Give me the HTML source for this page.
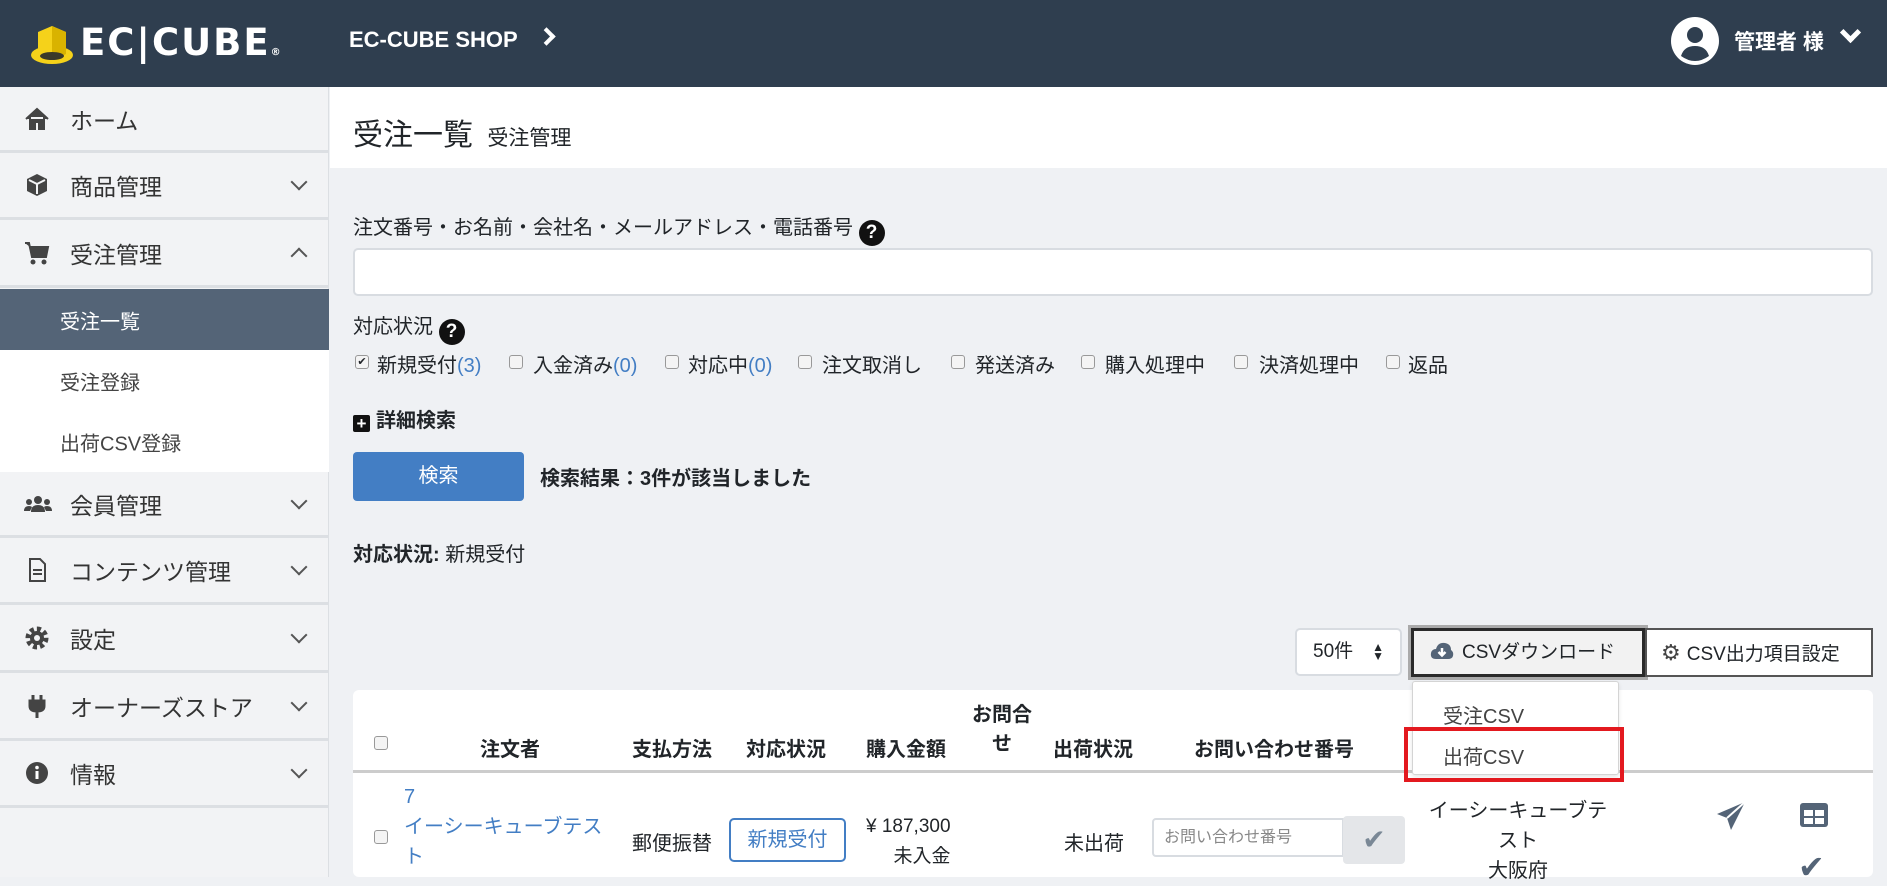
<!DOCTYPE html>
<html><head><meta charset="utf-8"><style>
*{box-sizing:border-box;margin:0;padding:0}
body{width:1887px;height:877px;overflow:hidden;background:#eff1f4;font-family:"Liberation Sans","Noto Sans CJK JP",sans-serif;color:#212529;position:relative}
.a{position:absolute;white-space:nowrap}
.hd{position:absolute;left:0;top:0;width:1887px;height:87px;background:#2f3e4f;color:#fff}
.sb{position:absolute;left:0;top:87px;width:329px;height:790px;background:#f2f3f5;border-right:1px solid #dcdfe3}
.it{position:absolute;left:0;width:329px;border-bottom:3px solid #dcdfe3;font-size:23px;color:#333}
.it span{position:absolute;left:70px;top:50%;transform:translateY(-50%)}
.it i{position:absolute;left:24px;top:50%;transform:translateY(-50%);width:26px;height:26px}
.it b{position:absolute;right:24px;top:50%;width:12px;height:12px;border-right:2px solid #555;border-bottom:2px solid #555;transform:translateY(-75%) rotate(45deg)}
.sub{position:absolute;left:0;width:329px;background:#fff;font-size:20px;color:#444}
.sub span{position:absolute;left:60px;top:50%;transform:translateY(-50%)}
.cb{display:inline-block;width:14px;height:14px;border:1px solid #999;border-radius:3px;background:#f4f4f4}
.ck{position:absolute;top:355px}
.ct{position:absolute;top:349px;font-size:20px;white-space:nowrap}
.th{position:absolute;font-weight:bold;font-size:20px;text-align:center}
</style></head><body>
<div class="hd">
 <svg class="a" style="left:29px;top:22px" width="46" height="44" viewBox="0 0 46 44"><ellipse cx="23" cy="33" rx="21" ry="9" fill="#f5d21a"/><path d="M9 10 L23 4 L37 10 L37 32 Q23 40 9 32Z" fill="#f5d21a"/><path d="M23 4 L37 10 L37 32 Q30 36 23 36Z" fill="#d9b300"/><ellipse cx="23" cy="34" rx="12" ry="4" fill="#3a3a2a"/></svg>
 <div class="a" style="left:80px;top:21px;font-size:37px;font-weight:bold;letter-spacing:2px;font-family:'DejaVu Sans',sans-serif">EC|CUBE<span style="font-size:10px">®</span></div>
 <div class="a" style="left:349px;top:27px;font-size:22px;font-weight:bold">EC-CUBE SHOP</div>
 <div class="a" style="left:540px;top:30px;width:13px;height:13px;border-right:4px solid #fff;border-top:4px solid #fff;transform:rotate(45deg)"></div>
 <svg class="a" style="left:1670px;top:16px" width="50" height="50" viewBox="0 0 50 50"><circle cx="25" cy="25" r="24" fill="#fff"/><circle cx="25" cy="19" r="8" fill="#2f3e4f"/><path d="M11 40 Q14 30 25 30 Q36 30 39 40 Q25 50 11 40Z" fill="#2f3e4f"/></svg>
 <div class="a" style="left:1734px;top:26px;font-size:21px;font-weight:bold">管理者 様</div>
 <div class="a" style="left:1843px;top:25px;width:15px;height:15px;border-right:5px solid #fff;border-bottom:5px solid #fff;transform:rotate(45deg)"></div>
</div>
<div class="sb">
 <div class="it" style="top:0;height:66px"><i><svg width="26" height="26" viewBox="0 0 26 26"><path d="M2 13 L13 3 L24 13 M6 11 V23 H11 V16 H15 V23 H20 V11" fill="#444" stroke="#444" stroke-width="2"/></svg></i><span>ホーム</span></div>
 <div class="it" style="top:66px;height:67px"><i><svg width="26" height="26" viewBox="0 0 26 26"><path d="M13 2 L23 7 V19 L13 24 L3 19 V7Z" fill="#444"/><path d="M5 8 L13 12 L21 8 M13 12 V22" stroke="#f2f3f5" stroke-width="2" fill="none"/></svg></i><span>商品管理</span><b></b></div>
 <div class="it" style="top:133px;height:68px"><i><svg width="26" height="26" viewBox="0 0 26 26"><path d="M1 3 H5 L8 17 H22 L24 7 H6" fill="#444" stroke="#444" stroke-width="2"/><circle cx="9" cy="22" r="2.5" fill="#444"/><circle cx="20" cy="22" r="2.5" fill="#444"/></svg></i><span>受注管理</span><b style="transform:translateY(-25%) rotate(225deg)"></b></div>
 <div class="sub" style="top:202px;height:61px;background:#546477;color:#fff"><span>受注一覧</span></div>
 <div class="sub" style="top:263px;height:62px"><span>受注登録</span></div>
 <div class="sub" style="top:325px;height:60px"><span>出荷CSV登録</span></div>
 <div class="it" style="top:385px;height:66px"><i><svg width="28" height="26" viewBox="0 0 28 26"><circle cx="14" cy="9" r="4" fill="#444"/><circle cx="5" cy="11" r="3" fill="#444"/><circle cx="23" cy="11" r="3" fill="#444"/><path d="M7 21 Q7 14 14 14 Q21 14 21 21Z M0 20 Q0 15 5 15 Q7 15 8 16 L6 20Z M28 20 Q28 15 23 15 Q21 15 20 16 L22 20Z" fill="#444"/></svg></i><span>会員管理</span><b></b></div>
 <div class="it" style="top:451px;height:67px"><i><svg width="26" height="26" viewBox="0 0 26 26"><path d="M6 2 H16 L21 7 V24 H6Z" fill="none" stroke="#444" stroke-width="2"/><path d="M9 13 H18 M9 17 H18" stroke="#444" stroke-width="2"/></svg></i><span>コンテンツ管理</span><b></b></div>
 <div class="it" style="top:518px;height:68px"><i><svg width="26" height="26" viewBox="0 0 26 26"><circle cx="13" cy="13" r="9" fill="none" stroke="#444" stroke-width="5" stroke-dasharray="4 3"/><circle cx="13" cy="13" r="7" fill="#444"/><circle cx="13" cy="13" r="3" fill="#f2f3f5"/></svg></i><span>設定</span><b></b></div>
 <div class="it" style="top:586px;height:68px"><i><svg width="26" height="26" viewBox="0 0 26 26"><path d="M9 2 V8 M17 2 V8 M6 8 H20 V13 Q20 18 13 18 Q6 18 6 13Z M13 18 V25" stroke="#444" stroke-width="3" fill="#444"/></svg></i><span>オーナーズストア</span><b></b></div>
 <div class="it" style="top:654px;height:67px"><i><svg width="26" height="26" viewBox="0 0 26 26"><circle cx="13" cy="13" r="11" fill="#444"/><rect x="11.5" y="11" width="3" height="8" fill="#fff"/><circle cx="13" cy="7.5" r="1.8" fill="#fff"/></svg></i><span>情報</span><b></b></div>
</div>
<div class="a" style="left:330px;top:87px;width:1557px;height:81px;background:#fff"></div>
<div class="a" style="left:353px;top:110px;font-size:30px">受注一覧 <span style="font-size:21px;margin-left:6px">受注管理</span></div>
<div class="a" style="left:353px;top:211px;font-size:20px">注文番号・お名前・会社名・メールアドレス・電話番号 <span style="display:inline-block;width:26px;height:26px;border-radius:50%;background:#111;color:#fff;font-weight:bold;text-align:center;line-height:26px;font-size:19px;vertical-align:-4px">?</span></div>
<div class="a" style="left:353px;top:248px;width:1520px;height:48px;background:#fff;border:2px solid #d8dce1;border-radius:5px"></div>
<div class="a" style="left:353px;top:310px;font-size:20px">対応状況 <span style="display:inline-block;width:26px;height:26px;border-radius:50%;background:#111;color:#fff;font-weight:bold;text-align:center;line-height:26px;font-size:19px;vertical-align:-4px">?</span></div>
<span class="cb ck" style="left:355px;text-align:center;font-size:11px;line-height:12px">✔</span><div class="ct" style="left:377px">新規受付<span style="color:#437ec4">(3)</span></div>
<span class="cb ck" style="left:509px"></span><div class="ct" style="left:533px">入金済み<span style="color:#437ec4">(0)</span></div>
<span class="cb ck" style="left:665px"></span><div class="ct" style="left:688px">対応中<span style="color:#437ec4">(0)</span></div>
<span class="cb ck" style="left:798px"></span><div class="ct" style="left:822px">注文取消し</div>
<span class="cb ck" style="left:951px"></span><div class="ct" style="left:975px">発送済み</div>
<span class="cb ck" style="left:1081px"></span><div class="ct" style="left:1105px">購入処理中</div>
<span class="cb ck" style="left:1234px"></span><div class="ct" style="left:1259px">決済処理中</div>
<span class="cb ck" style="left:1386px"></span><div class="ct" style="left:1408px">返品</div>
<div class="a" style="left:353px;top:404px;font-size:20px;font-weight:bold"><span style="display:inline-block;width:17px;height:17px;background:#111;color:#fff;text-align:center;line-height:17px;font-size:17px;border-radius:2px;vertical-align:-2px;margin-right:6px">+</span>詳細検索</div>
<div class="a" style="left:353px;top:452px;width:171px;height:49px;background:#437ec4;border-radius:4px;color:#fff;font-size:20px;text-align:center;line-height:49px">検索</div>
<div class="a" style="left:540px;top:462px;font-size:20px;font-weight:bold">検索結果：3件が該当しました</div>
<div class="a" style="left:353px;top:538px;font-size:20px"><b>対応状況:</b> 新規受付</div>
<div class="a" style="left:1295px;top:628px;width:107px;height:48px;background:#fff;border:2px solid #d8dce1;border-radius:5px;font-size:19px;line-height:44px;padding-left:16px">50件 <span style="position:absolute;right:16px;font-size:12px;line-height:9px;top:13px;text-align:center">▲<br>▼</span></div>
<div class="a" style="left:1411px;top:628px;width:234px;height:49px;background:#f2f2f2;border:3px solid #2a2a2a;box-shadow:0 0 0 3px #aaa;font-size:19px;line-height:43px;padding-left:16px"><svg width="24" height="20" viewBox="0 0 24 20" style="vertical-align:-3px;margin-right:8px"><path d="M6 18 Q0 18 1 12 Q2 8 6 8 Q8 1 15 2 Q21 3 21 9 Q24 11 23 15 Q22 18 18 18Z" fill="#546477"/><path d="M12 7 V14 M8.5 11 L12 14.5 L15.5 11" stroke="#fff" stroke-width="2.5" fill="none"/></svg>CSVダウンロード</div>
<div class="a" style="left:1645px;top:628px;width:228px;height:49px;background:#fff;border:2px solid #555;font-size:19px;line-height:45px;padding-left:14px"><span style="font-size:22px;color:#444;margin-right:6px">⚙</span>CSV出力項目設定</div>
<div class="a" style="left:353px;top:690px;width:1520px;height:187px;background:#fff;border-radius:6px"></div>
<div class="a" style="left:353px;top:770px;width:1520px;height:3px;background:#ccc"></div>
<span class="cb a" style="left:374px;top:736px"></span>
<div class="th" style="left:480px;top:733px">注文者</div>
<div class="th" style="left:632px;top:733px">支払方法</div>
<div class="th" style="left:746px;top:733px">対応状況</div>
<div class="th" style="left:866px;top:733px">購入金額</div>
<div class="th" style="left:972px;top:701px;line-height:29px">お問合<br>せ</div>
<div class="th" style="left:1053px;top:733px">出荷状況</div>
<div class="th" style="left:1194px;top:733px">お問い合わせ番号</div>
<span class="cb a" style="left:374px;top:830px"></span>
<div class="a" style="left:404px;top:782px;font-size:20px;color:#437ec4;line-height:30px">7<br>イーシーキューブテス<br>ト</div>
<div class="a" style="left:632px;top:827px;font-size:20px">郵便振替</div>
<div class="a" style="left:729px;top:818px;width:117px;height:44px;border:2px solid #437ec4;border-radius:5px;color:#437ec4;font-size:20px;text-align:center;line-height:40px">新規受付</div>
<div class="a" style="left:866px;top:812px;font-size:19px;text-align:right;line-height:30px">¥ 187,300<br>未入金</div>
<div class="a" style="left:1064px;top:827px;font-size:20px">未出荷</div>
<div class="a" style="left:1152px;top:818px;width:192px;height:39px;border:2px solid #d8dce1;border-radius:4px 0 0 4px;font-size:16px;color:#888;line-height:35px;padding-left:10px">お問い合わせ番号</div>
<div class="a" style="left:1343px;top:816px;width:62px;height:48px;background:#e4e6e9;border-radius:4px;text-align:center;line-height:48px;font-size:28px;color:#7a8896">✔</div>
<div class="a" style="left:1418px;top:796px;width:200px;font-size:20px;text-align:center;line-height:30px">イーシーキューブテ<br>スト<br>大阪府</div>
<svg class="a" style="left:1715px;top:800px" width="32" height="32" viewBox="0 0 32 32"><path d="M30 2 L2 14 L12 18 L16 30Z" fill="#546477"/><path d="M12 18 L30 2" stroke="#fff" stroke-width="2"/></svg>
<svg class="a" style="left:1799px;top:802px" width="30" height="26" viewBox="0 0 30 26"><rect x="1" y="1" width="28" height="24" rx="3" fill="#546477"/><rect x="5" y="8" width="9" height="6" fill="#fff"/><rect x="16" y="8" width="9" height="6" fill="#fff"/><rect x="5" y="16" width="9" height="6" fill="#fff"/><rect x="16" y="16" width="9" height="6" fill="#fff"/></svg>
<div class="a" style="left:1798px;top:848px;font-size:32px;color:#546477">✔</div>
<div class="a" style="left:1412px;top:681px;width:207px;height:94px;background:#fff;border:1px solid #d4d4d4;border-radius:3px;box-shadow:0 2px 4px rgba(0,0,0,.1)"></div>
<div class="a" style="left:1443px;top:700px;font-size:20px;color:#444">受注CSV</div>
<div class="a" style="left:1404px;top:727px;width:220px;height:55px;border:4px solid #e3191f"></div>
<div class="a" style="left:1443px;top:741px;font-size:20px;color:#444">出荷CSV</div>
</body></html>
